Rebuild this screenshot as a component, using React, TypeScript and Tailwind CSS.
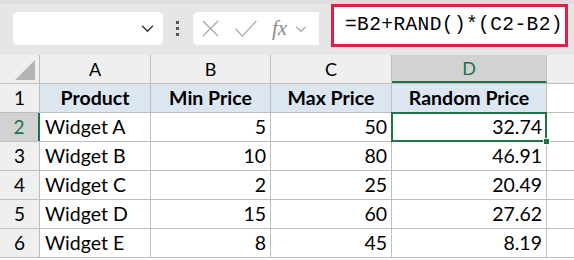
import React from "react";

const cols = ["A", "B", "C", "D"];
const widths = ["w-[111px]", "w-[120px]", "w-[121px]", "w-[155px]"];

const rows = [
  ["Widget A", "5", "50", "32.74"],
  ["Widget B", "10", "80", "46.91"],
  ["Widget C", "2", "25", "20.49"],
  ["Widget D", "15", "60", "27.62"],
  ["Widget E", "8", "45", "8.19"],
];

function Chevron({ className }: { className?: string }) {
  return (
    <svg viewBox="0 0 16 10" className={className} fill="none" stroke="currentColor" strokeWidth="1.6">
      <path d="M2 2l6 6 6-6" />
    </svg>
  );
}

export default function App() {
  return (
    <div className="w-[574px] h-[260px] overflow-hidden bg-white" style={{ fontFamily: "Lato, 'Open Sans', sans-serif" }}>
      {/* Formula bar */}
      <div className="h-[55px] bg-[#e6e6e6] flex items-start relative border-t-4 border-[#dedede]">
        <div className="mt-[8px] ml-[13px] w-[150px] h-[33px] bg-white rounded-[5px] flex items-center justify-end pr-[8px] text-[#333]">
          <Chevron className="w-[15px] h-[9px]" />
        </div>
        <div className="mt-[17px] ml-[13px] flex flex-col gap-[3px]">
          <span className="w-[3px] h-[3px] bg-[#555]" />
          <span className="w-[3px] h-[3px] bg-[#555]" />
          <span className="w-[3px] h-[3px] bg-[#555]" />
        </div>
        <div className="mt-[8px] ml-[14px] w-[126px] h-[33px] bg-white rounded-l-[5px] flex items-center pl-[9px] text-[#a6a6a6]">
          <svg viewBox="0 0 18 18" className="w-[17px] h-[17px]" fill="none" stroke="currentColor" strokeWidth="1.3">
            <path d="M1 1l16 16M17 1L1 17" />
          </svg>
          <svg viewBox="0 0 24 18" className="w-[24px] h-[17px] ml-[15px]" fill="none" stroke="currentColor" strokeWidth="1.3">
            <path d="M1 9l7 8L23 1" />
          </svg>
          <span className="ml-[14px] text-[21px] italic text-[#8c8c8c] leading-none" style={{ fontFamily: "'Liberation Serif', serif" }}>
            fx
          </span>
          <Chevron className="w-[14px] h-[8px] ml-[7px] text-[#a6a6a6]" />
        </div>
        <div className="absolute left-[331px] top-0 w-[237px] h-[43px] bg-white border-[3px] border-[#e01e4a] flex items-center pl-[11px]">
          <span className="text-[19.5px] text-black tracking-[0.4px]" style={{ fontFamily: "'Liberation Mono', monospace" }}>
            =B2+RAND()*(C2-B2)
          </span>
        </div>
      </div>

      {/* Grid */}
      <div className="flex h-[29px] bg-[#efefef] border-b border-[#bfbfbf]">
        <div className="w-[40px] h-full border-r border-[#bfbfbf] flex items-end justify-end pr-[4px] pb-[3px]">
          <div className="w-0 h-0 border-l-[20px] border-l-transparent border-b-[20px] border-b-[#b4b4b4]" />
        </div>
        {cols.map((c, i) => (
          <div
            key={c}
            className={`${widths[i]} h-full border-r border-[#bfbfbf] flex items-center justify-center text-[18px] ${
              c === "D" ? "bg-[#d2d2d2] text-[#217346] border-b-2 border-b-[#217346]" : "text-black"
            }`}
          >
            {c}
          </div>
        ))}
        <div className="flex-1" />
      </div>

      <div className="flex h-[29px] border-b border-[#bfbfbf]">
        <div className="w-[40px] h-full bg-[#efefef] border-r border-[#bfbfbf] flex items-center justify-center text-[19px]">1</div>
        {["Product", "Min Price", "Max Price", "Random Price"].map((h, i) => (
          <div
            key={h}
            className={`${widths[i]} h-full bg-[#dce6f1] border-r border-[#bfbfbf] flex items-center justify-center text-[19.5px] font-bold`}
          >
            {h}
          </div>
        ))}
        <div className="flex-1" />
      </div>

      {rows.map((r, ri) => {
        const sel = ri === 0;
        return (
          <div key={ri} className={`flex h-[29px] border-b border-[#bfbfbf] ${sel ? "relative z-10" : ""}`}>
            <div
              className={`w-[40px] h-full flex items-center justify-center text-[19px] ${
                sel ? "bg-[#d2d2d2] text-[#217346] border-r-2 border-[#217346]" : "bg-[#efefef] border-r border-[#bfbfbf]"
              }`}
            >
              {ri + 2}
            </div>
            {r.map((v, ci) => (
              <div
                key={ci}
                className={`${widths[ci]} h-full border-r border-[#bfbfbf] flex items-center text-[19.5px] relative ${
                  ci === 0 ? "justify-start pl-[5px]" : "justify-end pr-[4px]"
                }`}
              >
                {v}
                {sel && ci === 3 && (
                  <>
                    <div className="absolute -left-[1px] -top-[1px] -right-[1px] -bottom-[1px] border-2 border-[#217346]" />
                    <div className="absolute -right-[4px] -bottom-[4px] w-[7px] h-[7px] bg-[#217346] border border-white" />
                  </>
                )}
              </div>
            ))}
            <div className="flex-1" />
          </div>
        );
      })}
    </div>
  );
}
